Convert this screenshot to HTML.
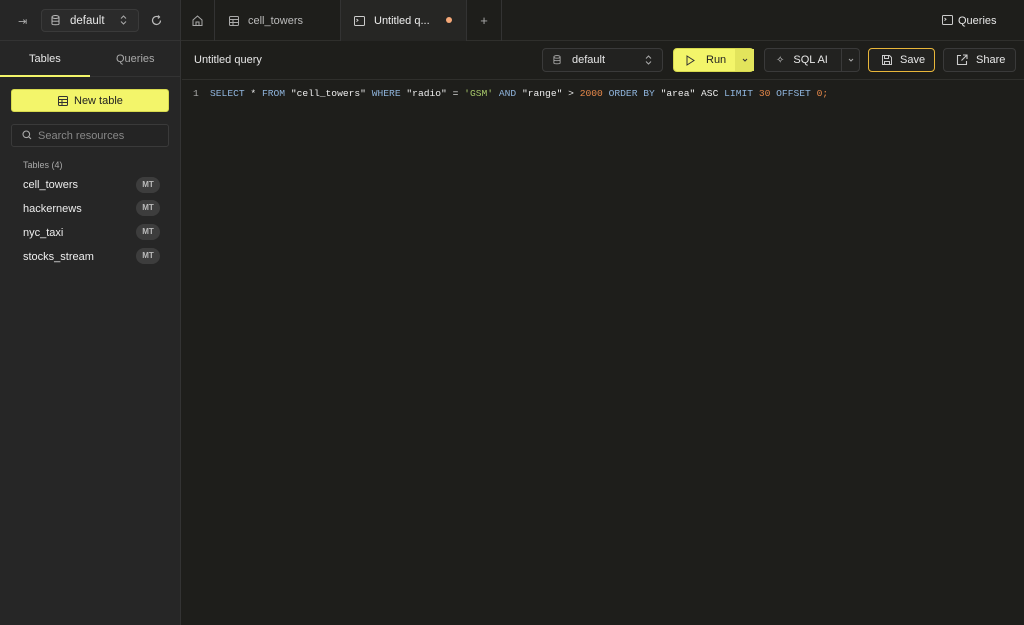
<!DOCTYPE html>
<html><head><style>
*{box-sizing:border-box;margin:0;padding:0}
body{width:1024px;height:625px;background:#1e1e1b;font-family:"Liberation Sans",sans-serif;color:#e8e8e8;position:relative;overflow:hidden;font-size:12px}
.abs{position:absolute}
.side{left:0;top:0;width:181px;height:625px;background:#262626;border-right:1px solid #333}
.top{left:181px;top:0;right:0;height:41px;background:#1e1e1b;border-bottom:1px solid #2f2f2c}
.tab{position:absolute;top:0;height:41px;border-right:1px solid #333;display:flex;align-items:center;color:#bbb}
svg{display:block}
.btn{position:absolute;top:48px;height:24px;border:1px solid #3a3a3a;border-radius:4px;display:flex;align-items:center;background:#222220}
.mt{position:absolute;left:136px;width:24px;height:16px;border-radius:8px;background:#3d3d3d;color:#bbb;font-size:8px;font-weight:bold;text-align:center;line-height:16px}
.item{position:absolute;left:23px;font-size:11px;color:#eee}
</style></head><body>
<div class="abs side">
  <div class="abs" style="left:0;top:0;width:181px;height:41px;border-bottom:1px solid #333"></div>
  <div class="abs" style="left:18px;top:15px;color:#aaa;font-size:11px">⇥</div>
  <div class="abs" style="left:41px;top:9px;width:98px;height:23px;border:1px solid #3a3a3a;border-radius:4px;background:#2b2b2b"></div>
  <svg class="abs" style="left:51px;top:15px" width="9" height="11" viewBox="0 0 9 11"><ellipse cx="4.5" cy="2" rx="3.5" ry="1.5" fill="none" stroke="#bbb"/><path d="M1 2v7c0 1 7 1 7 0V2M1 5.5c0 1 7 1 7 0" fill="none" stroke="#bbb"/></svg>
  <div class="abs" style="left:70px;top:15px;font-size:11.5px">default</div>
  <svg class="abs" style="left:120px;top:15px" width="7" height="10" viewBox="0 0 7 10"><path d="M1 3.5L3.5 1 6 3.5M1 6.5L3.5 9 6 6.5" fill="none" stroke="#aaa"/></svg>
  <svg class="abs" style="left:151px;top:15px" width="11" height="11" viewBox="0 0 11 11"><path d="M9.5 5.5A4 4 0 1 1 7.5 2" fill="none" stroke="#bbb" stroke-width="1.2"/><path d="M7 0.5l1.5 1.5L7 3.5" fill="none" stroke="#bbb" stroke-width="1.2"/></svg>
  <div class="abs" style="left:0;top:41px;width:181px;height:36px;border-bottom:1px solid #333"></div>
  <div class="abs" style="left:0;top:75px;width:90px;height:2px;background:#f3f56a"></div>
  <div class="abs" style="left:29px;top:53px;font-size:11px">Tables</div>
  <div class="abs" style="left:116px;top:53px;font-size:11px;color:#aaa">Queries</div>
  <div class="abs" style="left:11px;top:89px;width:158px;height:23px;background:#f3f56a;border-radius:3px;border:1px solid #d7d94e"></div>
  <svg class="abs" style="left:58px;top:96px" width="10" height="10" viewBox="0 0 10 10"><rect x=".5" y=".5" width="9" height="9" rx="1" fill="none" stroke="#333"/><path d="M.5 3.5h9M.5 6.5h9M4 3.5v6" stroke="#333"/></svg>
  <div class="abs" style="left:74px;top:95px;font-size:11px;color:#222">New table</div>
  <div class="abs" style="left:11px;top:124px;width:158px;height:23px;border:1px solid #3a3a3a;border-radius:3px;background:#242424"></div>
  <svg class="abs" style="left:22px;top:130px" width="10" height="10" viewBox="0 0 10 10"><circle cx="4.3" cy="4.3" r="3.3" fill="none" stroke="#aaa" stroke-width="1.1"/><path d="M6.8 6.8L9 9" stroke="#aaa" stroke-width="1.1"/></svg>
  <div class="abs" style="left:38px;top:130px;font-size:11px;color:#888">Search resources</div>
  <div class="abs" style="left:23px;top:160px;font-size:9px;color:#aaa">Tables (4)</div>
  <div class="item" style="top:179px">cell_towers</div><div class="mt" style="top:177px">MT</div>
  <div class="item" style="top:203px">hackernews</div><div class="mt" style="top:200px">MT</div>
  <div class="item" style="top:227px">nyc_taxi</div><div class="mt" style="top:224px">MT</div>
  <div class="item" style="top:251px">stocks_stream</div><div class="mt" style="top:248px">MT</div>
</div>
<div class="abs top">
  <div class="tab" style="left:0;width:34px;justify-content:center"><svg width="11" height="11" viewBox="0 0 11 11"><path d="M1 5L5.5 1 10 5v5.5H1z M4 10.5V7h3v3.5" fill="none" stroke="#aaa"/></svg></div>
  <div class="tab" style="left:34px;width:126px;padding-left:14px"><svg width="10" height="10" viewBox="0 0 10 10"><rect x=".5" y=".5" width="9" height="9" rx="1" fill="none" stroke="#aaa"/><path d="M.5 3.5h9M.5 6.5h9M4 3.5v6" stroke="#aaa"/></svg><span style="margin-left:9px;font-size:11px">cell_towers</span></div>
  <div class="tab" style="left:160px;width:126px;padding-left:13px;background:#262624;color:#eee"><svg width="11" height="10" viewBox="0 0 11 10"><rect x=".5" y=".5" width="10" height="9" rx="1" fill="none" stroke="#ccc"/><path d="M2.5 3l1.5 1.3-1.5 1.3" fill="none" stroke="#ccc"/></svg><span style="margin-left:9px;font-size:11px">Untitled q...</span><span style="position:absolute;left:105px;top:17px;width:6px;height:6px;border-radius:3px;background:#f5a878"></span></div>
  <div class="tab" style="left:286px;width:35px;justify-content:center;font-size:13px;color:#aaa">+</div>
  <svg class="abs" style="left:761px;top:15px" width="11" height="10" viewBox="0 0 11 10"><rect x=".5" y=".5" width="10" height="9" rx="1" fill="none" stroke="#ccc"/><path d="M2.5 3l1.5 1.3-1.5 1.3" fill="none" stroke="#ccc"/></svg>
  <div class="abs" style="left:777px;top:15px;font-size:11px">Queries</div>
</div>
<div class="abs" style="left:182px;top:41px;right:0;height:39px;border-bottom:1px solid #2f2f2c"></div>
<div class="abs" style="left:194px;top:54px;font-size:11px">Untitled query</div>
<div class="btn" style="left:542px;width:121px"><svg style="margin-left:10px" width="8" height="10" viewBox="0 0 9 11"><ellipse cx="4.5" cy="2" rx="3.5" ry="1.5" fill="none" stroke="#aaa"/><path d="M1 2v7c0 1 7 1 7 0V2M1 5.5c0 1 7 1 7 0" fill="none" stroke="#aaa"/></svg><span style="margin-left:11px;font-size:11px">default</span><svg style="position:absolute;left:102px;top:6px" width="7" height="10" viewBox="0 0 7 10"><path d="M1 3.5L3.5 1 6 3.5M1 6.5L3.5 9 6 6.5" fill="none" stroke="#aaa"/></svg></div>
<div class="btn" style="left:673px;width:81px;background:#f3f56a;border-color:#d7d94e;color:#222"><svg style="margin-left:12px" width="9" height="11" viewBox="0 0 9 11"><path d="M1 1l7 4.5L1 10z" fill="none" stroke="#333"/></svg><span style="margin-left:11px;font-size:11px">Run</span><span style="position:absolute;left:61px;top:0;width:19px;height:22px;background:#e2e45c"><svg style="margin:9px auto 0" width="6" height="4" viewBox="0 0 6 4"><path d="M1 1l2 2 2-2" fill="none" stroke="#333"/></svg></span></div>
<div class="btn" style="left:764px;width:96px"><span style="margin-left:11px;font-size:10px;color:#ccc">✧</span><span style="margin-left:9px;font-size:11px">SQL AI</span><span style="position:absolute;left:76px;top:0;width:19px;height:22px;border-left:1px solid #3a3a3a"><svg style="margin:9px auto 0" width="6" height="4" viewBox="0 0 6 4"><path d="M1 1l2 2 2-2" fill="none" stroke="#aaa"/></svg></span></div>
<div class="btn" style="left:868px;width:67px;border:1.5px solid #e9b73a"><svg style="margin-left:13px" width="10" height="10" viewBox="0 0 10 10"><path d="M.5.5h7l2 2v7H.5z M2.5.5v3h4v-3 M2.5 9.5v-3h5v3" fill="none" stroke="#ccc"/></svg><span style="margin-left:8px;font-size:11px">Save</span></div>
<div class="btn" style="left:943px;width:73px"><svg style="margin-left:12px" width="12" height="12" viewBox="0 0 12 12"><path d="M5 1.5H1.5v9h9V7 M7 1h4v4 M11 1L5.5 6.5" fill="none" stroke="#ccc" stroke-width="1.1"/></svg><span style="margin-left:8px;font-size:11px">Share</span></div>
<div class="abs" style="left:193px;top:88px;font-family:'Liberation Mono',monospace;font-size:9.65px;color:#aaa">1</div>
<div class="abs" style="left:210px;top:88px;font-family:'Liberation Mono',monospace;font-size:9.65px;color:#eee;white-space:pre"><span style="color:#8fb4dc">SELECT</span> * <span style="color:#8fb4dc">FROM</span> "cell_towers" <span style="color:#8fb4dc">WHERE</span> "radio" = <span style="color:#a8c86a">'GSM'</span> <span style="color:#8fb4dc">AND</span> "range" &gt; <span style="color:#e8894a">2000</span> <span style="color:#8fb4dc">ORDER BY</span> "area" ASC <span style="color:#8fb4dc">LIMIT</span> <span style="color:#e8894a">30</span> <span style="color:#8fb4dc">OFFSET</span> <span style="color:#e8894a">0;</span></div>
</body></html>
